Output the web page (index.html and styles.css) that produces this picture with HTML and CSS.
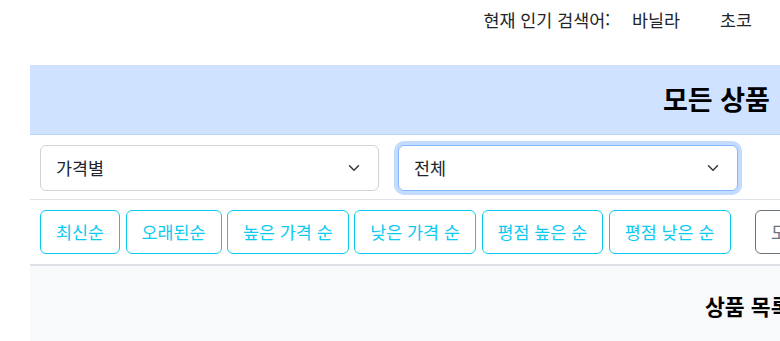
FILE: index.html
```html
<!DOCTYPE html>
<html lang="ko">
<head>
<meta charset="utf-8">
<link rel="stylesheet" href="styles.css">
</head>
<body>
<div class="topbar">
  <span class="label">현재 인기 검색어:</span>
  <span class="kw kw1">바닐라</span>
  <span class="kw kw2">초코</span>
</div>
<main class="page">
  <header class="hero"><h1 class="title">모든 상품</h1></header>
  <div class="filters">
    <div class="select"><span>가격별</span><svg class="chev" viewBox="0 0 16 16" width="16" height="12"><path d="m2 5 6 6 6-6" fill="none" stroke="#343a40" stroke-width="2" stroke-linecap="round" stroke-linejoin="round"/></svg></div>
    <div class="select focus"><span>전체</span><svg class="chev" viewBox="0 0 16 16" width="16" height="12"><path d="m2 5 6 6 6-6" fill="none" stroke="#343a40" stroke-width="2" stroke-linecap="round" stroke-linejoin="round"/></svg></div>
  </div>
  <div class="sorts">
    <button class="btn">최신순</button>
    <button class="btn">오래된순</button>
    <button class="btn">높은 가격 순</button>
    <button class="btn">낮은 가격 순</button>
    <button class="btn">평점 높은 순</button>
    <button class="btn">평점 낮은 순</button>
    <button class="btn sec">도움말</button>
  </div>
  <section class="list"><h2 class="list-title">상품 목록</h2></section>
</main>
</body>
</html>
```
FILE: styles.css
```css
html, body { margin: 0; padding: 0; overflow: hidden; background: #fff; }
body { font-family: "Noto Sans CJK KR", "Noto Sans", sans-serif; color: #212529; font-size: 17.4px; line-height: 24px; width: 780px; height: 341px; }
.topbar { display: flex; justify-content: flex-end; align-items: center; height: 24px; padding: 8px 28px 0 0; }
.kw1 { margin-left: 22px; }
.kw2 { margin-left: 40px; }
.page { margin: 33px 0 0 30px; width: 1373px; }
.hero { background: #cfe2ff; border-bottom: 1px solid #b6d4fe; height: 69px; display: flex; align-items: center; justify-content: center; }
.title { margin: 0; font-size: 27px; font-weight: 700; color: #000; line-height: 1.2; }
.filters { display: flex; gap: 19px; padding: 10px 10px 8px; border-bottom: 1px solid #dee2e6; }
.select { box-sizing: border-box; height: 46px; border: 1px solid #ced4da; border-radius: 6px; display: flex; align-items: center; justify-content: space-between; padding: 0 16px 0 15px; background: #fff; }
.select:first-child { width: 339px; }
.select.focus { width: 340px; border-color: #86b7fe; box-shadow: 0 0 0 4px rgba(13,110,253,.25); }
.sorts { display: flex; gap: 5.5px; padding: 10px; border-bottom: 2px solid #dee2e6; }
.btn { box-sizing: border-box; height: 44px; font: inherit; line-height: 24px; color: #0dcaf0; background: transparent; border: 1px solid #0dcaf0; border-radius: 6px; padding: 9px 15px; white-space: nowrap; }
.btn.sec { color: #6c757d; border-color: #6c757d; margin-left: 19px; }
.list { background: #f8f9fa; height: 200px; padding-top: 27px; }
.list-title { margin: 0; font-size: 21.6px; font-weight: 700; color: #000; line-height: 1.2; padding-left: 675px; }
```
